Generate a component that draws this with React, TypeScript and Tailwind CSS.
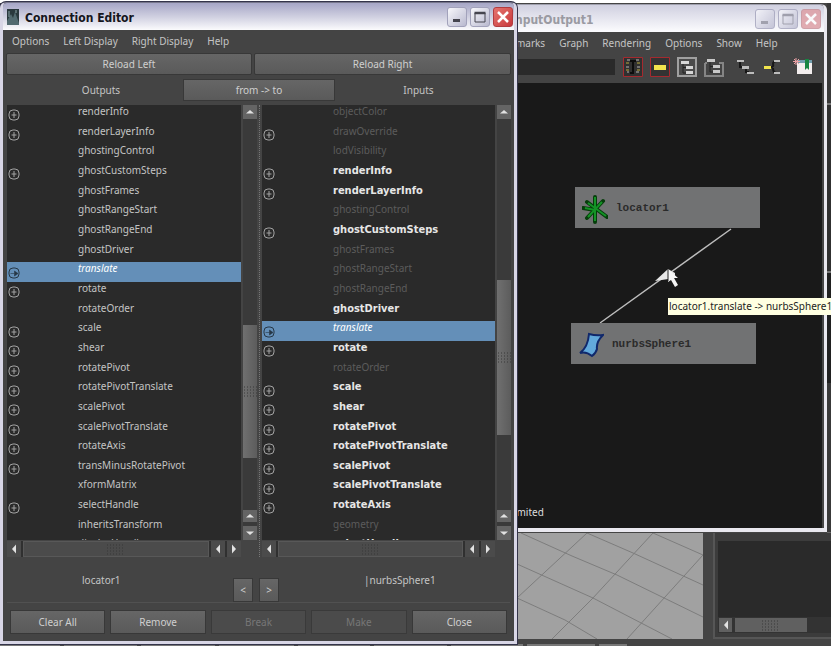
import type { ReactNode } from "react";

type Tone = "normal" | "bold" | "dim" | "selected";
type Row = { name: string; tone: Tone; icon?: boolean };

const row = (name: string, tone: Tone, icon = false): Row => ({ name, tone, icon });

const outputs: Row[] = [
  row("renderInfo", "normal", true),
  row("renderLayerInfo", "normal", true),
  row("ghostingControl", "normal"),
  row("ghostCustomSteps", "normal", true),
  row("ghostFrames", "normal"),
  row("ghostRangeStart", "normal"),
  row("ghostRangeEnd", "normal"),
  row("ghostDriver", "normal"),
  row("translate", "selected", true),
  row("rotate", "normal", true),
  row("rotateOrder", "normal"),
  row("scale", "normal", true),
  row("shear", "normal", true),
  row("rotatePivot", "normal", true),
  row("rotatePivotTranslate", "normal", true),
  row("scalePivot", "normal", true),
  row("scalePivotTranslate", "normal", true),
  row("rotateAxis", "normal", true),
  row("transMinusRotatePivot", "normal", true),
  row("xformMatrix", "normal"),
  row("selectHandle", "normal", true),
  row("inheritsTransform", "normal"),
  row("displayHandle", "normal"),
];

const inputs: Row[] = [
  row("objectColor", "dim"),
  row("drawOverride", "dim", true),
  row("lodVisibility", "dim"),
  row("renderInfo", "bold", true),
  row("renderLayerInfo", "bold", true),
  row("ghostingControl", "dim"),
  row("ghostCustomSteps", "bold", true),
  row("ghostFrames", "dim"),
  row("ghostRangeStart", "dim"),
  row("ghostRangeEnd", "dim"),
  row("ghostDriver", "bold"),
  row("translate", "selected", true),
  row("rotate", "bold", true),
  row("rotateOrder", "dim"),
  row("scale", "bold", true),
  row("shear", "bold", true),
  row("rotatePivot", "bold", true),
  row("rotatePivotTranslate", "bold", true),
  row("scalePivot", "bold", true),
  row("scalePivotTranslate", "bold", true),
  row("rotateAxis", "bold", true),
  row("geometry", "dim"),
  row("selectHandle", "bold"),
];

const tones: Record<Tone, string> = {
  normal: "text-[#c4c4c4]",
  bold: "font-['DejaVu_Sans_Condensed','DejaVu_Sans',sans-serif] text-[11px] font-bold text-[#e6e6e6]",
  dim: "text-[#5c5c5c]",
  selected: "italic text-white",
};

const face = "border border-[#383838] bg-linear-to-b from-[#666] to-[#5a5a5a] text-[#cfcfcf]";
const faceOff = "border border-[#3a3a3a] bg-[#4b4b4b] text-[#777]";

function PlugIcon({ selected }: { selected: boolean }) {
  return (
    <svg viewBox="0 0 12 12" className="size-3 shrink-0" aria-hidden="true">
      <rect x="1" y="1" width="10" height="10" rx="4" fill="none" stroke={selected ? "#263746" : "#a3a3a3"} />
      {selected ? (
        <path d="M2.500 6.500h4V4l3.500 2.500L6.500 9V6.500" fill="#263746" stroke="#263746" strokeWidth=".6" />
      ) : (
        <path d="M6 3v6M3.500 6h5" stroke="#a3a3a3" />
      )}
    </svg>
  );
}

function Arrow({ dir, className }: { dir: "up" | "down" | "left" | "right"; className: string }) {
  const d = {
    up: "M2 7.500 6 4l4 3.500z",
    down: "M2 4.500h8L6 8z",
    left: "M8 1.500v9L4 6z",
    right: "M4 1.500v9L8 6z",
  }[dir];
  return (
    <button type="button" aria-label={`Scroll ${dir}`} className={`flex shrink-0 items-center justify-center ${className}`}>
      <svg viewBox="0 0 12 12" className="size-3">
        <path d={d} fill="#e2e2e2" />
      </svg>
    </button>
  );
}

function Grip() {
  return (
    <svg viewBox="0 0 18 11" className="h-[11px] w-[18px] shrink-0" aria-hidden="true">
      {[0, 1, 2, 3].map((y) => (
        <path key={y} d={`M0 ${y * 3 + 1}h18`} stroke="#383838" strokeDasharray="1 2" />
      ))}
    </svg>
  );
}

function VScroll({ thumb, first, last }: { thumb: string; first: string; last: string }) {
  return (
    <div className="flex w-3.5 flex-col bg-[#3a3a3a]">
      <Arrow dir="up" className="h-3.5 bg-[#646464]" />
      <div className={first} />
      <div className={`flex items-center justify-center overflow-hidden bg-linear-to-r from-[#707070] to-[#5c5c5c] ${thumb}`}>
        <Grip />
      </div>
      <div className={last} />
      <Arrow dir="up" className="h-3 bg-[#646464]" />
      <Arrow dir="down" className="mt-1 h-3.5 bg-[#646464]" />
    </div>
  );
}

function AttributeList({ rows, label }: { rows: Row[]; label: string }) {
  return (
    <div className="h-[435px] overflow-hidden bg-[#2a2a2a]">
      <ul aria-label={label} className="flex h-[452px] flex-col">
        {rows.map((r) => (
          <li key={r.name} className={`flex min-h-0 flex-1 ${r.tone === "selected" ? "bg-[#648fb8]" : ""}`}>
            <button type="button" className="flex w-full items-start text-left">
              <span className="flex h-full w-[71px] shrink-0 items-center pl-px pt-px">
                {r.icon && <PlugIcon selected={r.tone === "selected"} />}
              </span>
              <span className={`leading-[13px] ${tones[r.tone]}`}>{r.name}</span>
            </button>
          </li>
        ))}
      </ul>
    </div>
  );
}

function HScroll() {
  return (
    <div className="mt-px flex h-4 gap-0.5 bg-[#303030]">
      <Arrow dir="left" className="w-3.5 bg-[#4b4b4b]" />
      <div className="flex flex-1 items-center justify-center border border-[#585858] bg-[#4b4b4b]">
        <Grip />
      </div>
      <Arrow dir="left" className="w-3.5 bg-[#4b4b4b]" />
      <Arrow dir="right" className="w-3.5 bg-[#4b4b4b]" />
    </div>
  );
}

function CaptionButtons({ faded = false }: { faded?: boolean }) {
  const plain = "flex h-5 w-5 items-center justify-center rounded-[3px] border border-[#a2a2bb] bg-linear-to-br from-[#f8f8fc] to-[#b9b9cf]";
  const ink = faded ? "#8f8f9d" : "#45454f";
  return (
    <div className={`flex gap-[3px] ${faded ? "opacity-80" : ""}`}>
      <button type="button" aria-label="Minimize" className={plain}>
        <svg viewBox="0 0 18 18" className="size-[18px]"><path d="M5 12.500h7" stroke={ink} strokeWidth="3" /></svg>
      </button>
      <button type="button" aria-label="Maximize" className={plain}>
        <svg viewBox="0 0 18 18" className="size-[18px]">
          <path d="M4 5h10v9H4z" fill="none" stroke={ink} />
          <path d="M3.500 5h11" stroke={ink} strokeWidth="2.500" />
        </svg>
      </button>
      <button
        type="button"
        aria-label="Close window"
        className={`flex h-5 w-5 items-center justify-center rounded-[3px] border ${faded ? "border-[#c68d95] bg-[#dd9ba1]" : "border-[#b23c40] bg-linear-to-br from-[#e5736f] to-[#c8363b]"}`}
      >
        <svg viewBox="0 0 18 18" className="size-[18px]"><path d="m4 4 10 10M14 4 4 14" stroke="#fff" strokeWidth="2.500" /></svg>
      </button>
    </div>
  );
}

function Menu({ items, className }: { items: string[]; className: string }) {
  return (
    <nav className={`flex items-center gap-3.5 ${className}`}>
      {items.map((m) => (
        <button type="button" key={m}>{m}</button>
      ))}
    </nav>
  );
}

function ConnectionEditor() {
  return (
    <section className="absolute left-0 top-0.5 z-10 w-[517px] rounded-t-md border-x-[3px] border-b-[3px] border-t border-[#d8d6e6] border-t-[#77778c] bg-[#444] shadow-[0_0_0_1px_#34344a]">
      <header className="flex h-[27px] items-center rounded-t bg-linear-to-b from-[#a6a6c6] via-[#cfcfe0] to-[#fbfbfd] pl-1 pr-px">
        <svg viewBox="0 0 12 16" className="mr-1.5 h-4 w-3" aria-hidden="true">
          <path d="M0 0h12v16H0z" fill="#29383d" />
          <path d="m0 12 4-7 2 4 2-6 4 11v2H0z" fill="#526a70" />
          <path d="M2 2v6M9 1v3" stroke="#8ba3a8" />
        </svg>
        <h1 className="flex-1 pt-0.5 font-['DejaVu_Sans_Condensed','DejaVu_Sans',sans-serif] text-xs font-bold text-[#15151c]">Connection Editor</h1>
        <CaptionButtons />
      </header>

      <Menu className="h-[22px] pl-[9px]" items={["Options", "Left Display", "Right Display", "Help"]} />

      <div className="flex gap-0.5 px-[3px] pt-px">
        <button type="button" className={`h-[22px] w-[246px] rounded-xs ${face}`}>Reload Left</button>
        <button type="button" className={`h-[22px] flex-1 rounded-xs ${face}`}>Reload Right</button>
      </div>

      <div className="mt-1 flex h-[22px] items-center text-center">
        <h2 className="w-[180px] pl-4">Outputs</h2>
        <button type="button" className={`h-full w-[152px] ${face}`}>from -&gt; to</button>
        <h2 className="flex-1 pr-3">Inputs</h2>
      </div>

      <div className="mt-1 flex pl-1 pr-[3px]">
        <div className="w-[234px]">
          <AttributeList rows={outputs} label="Outputs" />
          <HScroll />
        </div>
        <div className="ml-0.5 flex h-[435px]">
          <VScroll first="h-[206px]" thumb="h-[133px]" last="flex-1" />
        </div>
        <div className="ml-0.5 mr-px w-0.5 border-l border-dotted border-[#777]" />
        <div className="min-w-0 flex-1">
          <AttributeList rows={inputs} label="Inputs" />
          <HScroll />
        </div>
        <div className="ml-0.5 flex h-[435px]">
          <VScroll first="h-[161px]" thumb="h-[155px]" last="flex-1" />
        </div>
      </div>

      <div className="flex h-[45px] text-[#c4c4c4]">
        <p className="w-[230px] pl-[79px] pt-4">locator1</p>
        <div className="flex items-end gap-1.5">
          <button type="button" aria-label="Previous" className={`h-6 w-5 ${face}`}>&lt;</button>
          <button type="button" aria-label="Next" className={`h-6 w-5 ${face}`}>&gt;</button>
        </div>
        <p className="flex-1 pl-[85px] pt-4">|nurbsSphere1</p>
      </div>

      <footer className="mx-1 flex gap-[5px] border-t border-[#515151] px-[3px] pb-[7px] pt-[7px]">
        <button type="button" className={`h-6 flex-1 ${face}`}>Clear All</button>
        <button type="button" className={`h-6 flex-1 ${face}`}>Remove</button>
        <button type="button" disabled className={`h-6 flex-1 ${faceOff}`}>Break</button>
        <button type="button" disabled className={`h-6 flex-1 ${faceOff}`}>Make</button>
        <button type="button" className={`h-6 flex-1 ${face}`}>Close</button>
      </footer>
    </section>
  );
}

function Tool({ label, children }: { label: string; children: ReactNode }) {
  return (
    <button type="button" aria-label={label} className="size-5">
      <svg viewBox="0 0 20 20" className="size-5">{children}</svg>
    </button>
  );
}

function Toolbar() {
  return (
    <div className="flex h-7 items-center bg-[#444] pb-1 pr-[9px]">
      <input aria-label="Work area path" className="h-4 min-w-0 flex-1 bg-[#2a2a2a]" />
      <div className="ml-2 flex gap-[7px]">
        <Tool label="Toggle swatches">
          <path d="M.5.500h19v19H.5z" fill="#303030" stroke="#a52a2f" />
          <path d="M4 3h3M13 3h3M3 10h3M14 10h3M4 15h2M13 15h3" stroke="#b4b4b4" />
          <path d="M3 6h3M14 6h3M3 13h3M14 13h3" stroke="#b9a93a" />
          <path d="M7 4h3v12H7M13 4h-3" fill="none" stroke="#0c0c0c" strokeWidth="2" />
        </Tool>
        <Tool label="Toggle node colour">
          <path d="M.5.500h19v19H.5z" fill="#333" stroke="#a52a2f" />
          <path d="M4 8h12v5H4z" fill="#f1e44d" />
        </Tool>
        <Tool label="Create container">
          <path d="M1 1h18v18H1z" fill="#4b4b4b" stroke="#a0a0a0" strokeWidth="2" />
          <path d="M4 4h8v3H4zM9 9h7v3H9zM9 14h7v3H9z" fill="#d6d6d6" />
          <path d="M6 7v9h3M6 10.500h3" fill="none" stroke="#222" />
        </Tool>
        <Tool label="Remove container">
          <path d="M1 6v13h18V6h-4M1 6h2" fill="none" stroke="#858585" strokeWidth="2" />
          <path d="M3 2h8v3H3zM9 8h7v3H9zM9 13h7v3H9z" fill="#c8c8c8" />
          <path d="M6 5v10h3M6 9.500h3" fill="none" stroke="#222" />
        </Tool>
      </div>
      <div className="ml-3 flex gap-[7px]">
        <Tool label="Rearrange outputs">
          <path d="M4 4v6h3M10 11v4h3" fill="none" stroke="#171717" strokeWidth="2" />
          <path d="M1 3h7v2H1zM6 9h7v3H6zM11 15h7v2h-7z" fill="#bcbcbc" />
        </Tool>
        <Tool label="Rearrange inputs">
          <path d="M8 10q3 0 2-3 0-3 4-3M10 11q0 5 4 5" fill="none" stroke="#171717" strokeWidth="2" />
          <path d="M1 9h7v3H1z" fill="#f1e44d" />
          <path d="M11 3h6v2h-6zM11 15h6v2h-6z" fill="#bcbcbc" />
        </Tool>
      </div>
      <div className="ml-2.5 flex">
        <Tool label="Create bookmark">
          <path d="M4 3h15v14H4z" fill="#f3eeee" />
          <path d="M4 3h15v3H4z" fill="#719ead" />
          <path d="M12 2h4v11l-2-2-2 2z" fill="#168642" />
          <path d="M3 1v7M0 4.500h7M1 2l5 5M6 2 1 7" stroke="#e9a0a5" />
        </Tool>
      </div>
    </div>
  );
}

function GraphNode({ name, className, children }: { name: string; className: string; children: ReactNode }) {
  return (
    <div className={`absolute flex h-[41px] w-[185px] items-center gap-2 bg-[#717273] pl-[7px] pt-0.5 font-['Liberation_Mono',monospace] text-[11px] font-bold text-[#2b2b2b] ${className}`}>
      <svg viewBox="0 0 26 30" className="h-[30px] w-[26px]" aria-hidden="true">{children}</svg>
      <span>{name}</span>
    </div>
  );
}

function Hypergraph() {
  return (
    <section className="absolute left-[480px] right-1 top-1 rounded-t-md border-x-[3px] border-b-[4px] border-t border-[#e9e8ef] border-t-[#a0a0ad] bg-[#444]">
      <header className="flex h-[27px] items-center rounded-t bg-linear-to-b from-[#d0d0e0] to-[#fcfcfe] pr-[3px]">
        <h1 className="flex-1 pl-7 pt-0.5 font-['DejaVu_Sans_Condensed','DejaVu_Sans',sans-serif] text-xs font-bold text-[#9a9aa2]">InputOutput1</h1>
        <CaptionButtons faded />
      </header>
      <div className="pr-0.5">
        <Menu className="h-[23px] pl-[9px]" items={["Bookmarks", "Graph", "Rendering", "Options", "Show", "Help"]} />
        <Toolbar />
        <div className="relative h-[445px] bg-[#191919]">
          <svg viewBox="0 0 134 96" className="absolute left-[116px] top-[145px] h-[96px] w-[134px]" aria-hidden="true">
            <path d="M1 95 132 1" stroke="#bdbdbd" strokeWidth="1.500" />
            <path d="m56 53 13-12 7 4v5z" fill="#e6e6e6" />
            <path d="M69 41v13l3-2 4 7 3-2-4-7h4z" fill="#f5f5f5" />
            <path d="M69 41v12" stroke="#222" />
          </svg>
          <GraphNode name="locator1" className="left-[92px] top-[104px]">
            <path d="M13 3v25M5 8l20 15M5 24 21 7M1 14l12 2" stroke="#063d0b" strokeWidth="4" strokeLinecap="round" />
            <path d="M13 3v24M6 9l18 13M6 23 20 8M3 14l10 2" stroke="#149326" strokeWidth="2" />
          </GraphNode>
          <GraphNode name="nurbsSphere1" className="left-[88px] top-[240px]">
            <path d="M11 4q7 2 14 1-7 7-6 14-1 4-5 7-6-5-12-3 8-6 9-19z" fill="#62a9dc" stroke="#10286b" strokeWidth="2" />
          </GraphNode>
          <p className="absolute bottom-2 left-4 text-[#dedede]">unlimited</p>
        </div>
      </div>
    </section>
  );
}

function PerspectiveView() {
  return (
    <div className="w-[703px] shrink-0 bg-[#a1a1a1] pl-[517px]">
      <svg viewBox="0 0 186 106" preserveAspectRatio="none" className="h-[106px] w-full" aria-hidden="true">
        <path
          d="M4 0 55 23 100 42 186 84M0 31 76 65 155 106M70 0 M136 0l50 22M0 65l48 22 32 19M0 65 70 0M35 106l40-40L136 0M110 106l76-84"
          fill="none"
          stroke="#7d7d7d"
        />
        <path d="M70 0 116 20 186 52" fill="none" stroke="#7d7d7d" />
      </svg>
    </div>
  );
}

export default function App() {
  return (
    <main className="relative flex h-screen w-full flex-col overflow-hidden bg-[#444] font-['Noto_Sans',sans-serif] text-[10px] text-[#c4c4c4]">
      <div className="h-[3px] bg-white" />
      <div className="flex flex-1 justify-end">
        <div className="flex w-1 flex-col">
          <div className="h-[100px] bg-[#393939]" />
          <div className="h-[170px] border-y-2 border-[#777] bg-[#303030]" />
          <div className="h-[110px] bg-[#202020]" />
          <div className="flex-1 border-b border-[#666] bg-[#393939]" />
        </div>
      </div>
      <div className="flex h-[106px]">
        <PerspectiveView />
        <div className="ml-2.5 flex flex-1 flex-col border-b-2 border-l-2 border-[#565656] bg-[#3c3c3c] pb-1 pl-[3px] pt-2">
          <div className="flex-1 bg-[#2a2a2a]" />
          <div className="flex h-4 gap-[3px] bg-[#333] p-px">
            <Arrow dir="left" className="w-[13px] bg-[#606060]" />
            <div className="flex w-[72px] items-center justify-center bg-[#606060]">
              <Grip />
            </div>
          </div>
        </div>
      </div>
      <div className="flex h-[7px] items-end gap-1 bg-[#444]">
        {[60, 73, 74, 75, 72, 73, 72, 68, 28].map((w, i) => (
          <div key={i} className="h-0.5 bg-[#777]" style={{ width: w }} />
        ))}
      </div>

      <Hypergraph />
      <ConnectionEditor />
      <div
        role="tooltip"
        className="absolute left-[668px] right-0 top-[298px] z-20 h-[17px] overflow-hidden whitespace-nowrap bg-[#ffffe1] pl-px leading-4 text-[#222]"
      >
        locator1.translate -&gt; nurbsSphere1
      </div>
    </main>
  );
}
